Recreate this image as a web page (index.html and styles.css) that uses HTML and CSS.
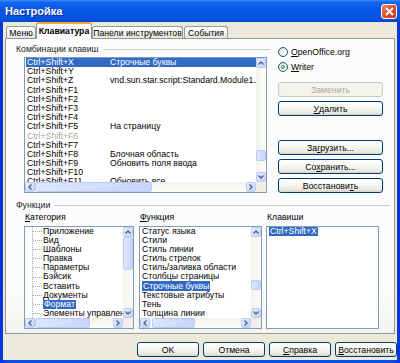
FILE: index.html
```html
<!DOCTYPE html>
<html lang="ru">
<head>
<meta charset="utf-8">
<title>Настройка</title>
<link rel="stylesheet" href="styles.css">
</head>
<body>
<div class="window">
  <div class="titlebar">
    <span class="title">Настройка</span>
    <span class="close"><svg width="9" height="9" viewBox="0 0 9 9"><path d="M1 1 L8 8 M8 1 L1 8" stroke="#fff" stroke-width="1.8" fill="none"/></svg></span>
  </div>
  <div class="client">
    <div class="tabs">
      <div class="tab t-menu">Меню</div>
      <div class="tab active t-kbd">Клавиатура</div>
      <div class="tab t-tool">Панели инструментов</div>
      <div class="tab t-ev">События</div>
    </div>
    <div class="panel">
      <div class="top">
        <div class="keys-col">
          <div class="fline"><span>Комбинации клавиш</span><i></i></div>
          <div class="list keylist">
            <div class="view">
              <div class="row sel"><span class="c1">Ctrl+Shift+X</span><span>Строчные буквы</span></div>
              <div class="row"><span class="c1">Ctrl+Shift+Y</span></div>
              <div class="row"><span class="c1">Ctrl+Shift+Z</span><span>vnd.sun.star.script:Standard.Module1.Abzac</span></div>
              <div class="row"><span class="c1">Ctrl+Shift+F1</span></div>
              <div class="row"><span class="c1">Ctrl+Shift+F2</span></div>
              <div class="row"><span class="c1">Ctrl+Shift+F3</span></div>
              <div class="row"><span class="c1">Ctrl+Shift+F4</span></div>
              <div class="row"><span class="c1">Ctrl+Shift+F5</span><span>На страницу</span></div>
              <div class="row dis"><span class="c1">Ctrl+Shift+F6</span></div>
              <div class="row"><span class="c1">Ctrl+Shift+F7</span></div>
              <div class="row"><span class="c1">Ctrl+Shift+F8</span><span>Блочная область</span></div>
              <div class="row"><span class="c1">Ctrl+Shift+F9</span><span>Обновить поля ввода</span></div>
              <div class="row"><span class="c1">Ctrl+Shift+F10</span></div>
              <div class="row"><span class="c1">Ctrl+Shift+F11</span><span>Обновить все</span></div>
            </div>
            <div class="vscroll">
              <span class="sb-btn"><svg width="6" height="4" viewBox="0 0 6 4"><path d="M0.5 3.5 L3 1 L5.5 3.5" stroke="#4D6185" stroke-width="1.4" fill="none"/></svg></span>
              <span class="thumb v-key"></span>
              <span class="sb-btn end"><svg width="6" height="4" viewBox="0 0 6 4"><path d="M0.5 0.5 L3 3 L5.5 0.5" stroke="#4D6185" stroke-width="1.4" fill="none"/></svg></span>
            </div>
            <div class="hscroll">
              <span class="sb-btn"><svg width="4" height="6" viewBox="0 0 4 6"><path d="M3.5 0.5 L1 3 L3.5 5.5" stroke="#4D6185" stroke-width="1.4" fill="none"/></svg></span>
              <span class="thumb h-key"></span>
              <span class="sb-btn end"><svg width="4" height="6" viewBox="0 0 4 6"><path d="M0.5 0.5 L3 3 L0.5 5.5" stroke="#4D6185" stroke-width="1.4" fill="none"/></svg></span>
            </div>
            <div class="corner"></div>
          </div>
        </div>
        <div class="side">
          <div class="radio-row"><span class="radio"></span><span><u>O</u>penOffice.org</span></div>
          <div class="radio-row"><span class="radio on"><b></b></span><span><u>W</u>riter</span></div>
          <button class="btn disabled b-replace">Заменить</button>
          <button class="btn b-del"><u>У</u>далить</button>
          <button class="btn b-load">За<u>г</u>рузить...</button>
          <button class="btn b-next">Со<u>х</u>ранить...</button>
          <button class="btn b-next">Восстанови<u>т</u>ь</button>
        </div>
      </div>
      <div class="fline funcs"><span>Функции</span><i></i></div>
      <div class="cols">
        <div class="col cat">
          <div class="lbl"><u>К</u>атегория</div>
          <div class="list">
            <div class="view">
              <div class="tree">
                <div class="trow"><span class="twig"></span><span>Приложение</span></div>
                <div class="trow"><span class="twig"></span><span>Вид</span></div>
                <div class="trow"><span class="twig"></span><span>Шаблоны</span></div>
                <div class="trow"><span class="twig"></span><span>Правка</span></div>
                <div class="trow"><span class="twig"></span><span>Параметры</span></div>
                <div class="trow"><span class="twig"></span><span>Бэйсик</span></div>
                <div class="trow"><span class="twig"></span><span>Вставить</span></div>
                <div class="trow"><span class="twig"></span><span>Документы</span></div>
                <div class="trow"><span class="twig"></span><span class="hl">Формат</span></div>
                <div class="trow"><span class="twig"></span><span>Элементы управления</span></div>
              </div>
            </div>
            <div class="vscroll">
              <span class="sb-btn"><svg width="6" height="4" viewBox="0 0 6 4"><path d="M0.5 3.5 L3 1 L5.5 3.5" stroke="#4D6185" stroke-width="1.4" fill="none"/></svg></span>
              <span class="thumb v-cat"></span>
              <span class="sb-btn end"><svg width="6" height="4" viewBox="0 0 6 4"><path d="M0.5 0.5 L3 3 L5.5 0.5" stroke="#4D6185" stroke-width="1.4" fill="none"/></svg></span>
            </div>
            <div class="hscroll">
              <span class="sb-btn"><svg width="4" height="6" viewBox="0 0 4 6"><path d="M3.5 0.5 L1 3 L3.5 5.5" stroke="#4D6185" stroke-width="1.4" fill="none"/></svg></span>
              <span class="thumb h-cat"></span>
              <span class="sb-btn end"><svg width="4" height="6" viewBox="0 0 4 6"><path d="M0.5 0.5 L3 3 L0.5 5.5" stroke="#4D6185" stroke-width="1.4" fill="none"/></svg></span>
            </div>
            <div class="corner"></div>
          </div>
        </div>
        <div class="col func">
          <div class="lbl"><u>Ф</u>ункция</div>
          <div class="list">
            <div class="view fview">
              <div class="frow">Статус языка</div>
              <div class="frow">Стили</div>
              <div class="frow">Стиль линии</div>
              <div class="frow">Стиль стрелок</div>
              <div class="frow">Стиль/заливка области</div>
              <div class="frow">Столбцы страницы</div>
              <div class="frow"><span class="hl">Строчные буквы</span></div>
              <div class="frow">Текстовые атрибуты</div>
              <div class="frow">Тень</div>
              <div class="frow">Толщина линии</div>
            </div>
            <div class="vscroll">
              <span class="sb-btn"><svg width="6" height="4" viewBox="0 0 6 4"><path d="M0.5 3.5 L3 1 L5.5 3.5" stroke="#4D6185" stroke-width="1.4" fill="none"/></svg></span>
              <span class="thumb v-func"></span>
              <span class="sb-btn end"><svg width="6" height="4" viewBox="0 0 6 4"><path d="M0.5 0.5 L3 3 L5.5 0.5" stroke="#4D6185" stroke-width="1.4" fill="none"/></svg></span>
            </div>
            <div class="hscroll">
              <span class="sb-btn"><svg width="4" height="6" viewBox="0 0 4 6"><path d="M3.5 0.5 L1 3 L3.5 5.5" stroke="#4D6185" stroke-width="1.4" fill="none"/></svg></span>
              <span class="thumb h-func"></span>
              <span class="sb-btn end"><svg width="4" height="6" viewBox="0 0 4 6"><path d="M0.5 0.5 L3 3 L0.5 5.5" stroke="#4D6185" stroke-width="1.4" fill="none"/></svg></span>
            </div>
            <div class="corner"></div>
          </div>
        </div>
        <div class="col keys">
          <div class="lbl">Клавиши</div>
          <div class="list plain">
            <div class="view fview">
              <div class="frow"><span class="hl">Ctrl+Shift+X</span></div>
            </div>
          </div>
        </div>
      </div>
    </div>
    <div class="dlg-buttons">
      <button class="btn b-dlg">OK</button>
      <button class="btn b-dlg">Отмена</button>
      <button class="btn b-dlg"><u>С</u>правка</button>
      <button class="btn b-dlg"><u>В</u>осстановить</button>
    </div>
  </div>
</div>
</body>
</html>
```

FILE: styles.css
```css
* { box-sizing: border-box; }
body {
  margin: 0;
  width: 400px;
  height: 363px;
  overflow: hidden;
  font-family: "Liberation Sans", Arial, sans-serif;
  font-size: 8.7px;
  color: #000;
}
u { text-decoration: underline; text-underline-offset: 1px; }
.window {
  width: 400px;
  height: 363px;
  display: flex;
  flex-direction: column;
  background: linear-gradient(90deg, #0831D9, #0A50E0 2%, #0A50E0 98%, #0831D9);
}
.titlebar {
  height: 22px;
  flex: none;
  display: flex;
  align-items: center;
  justify-content: space-between;
  padding: 0 3px 0 5px;
  background: linear-gradient(#3C8EF6 0%, #1366EE 10%, #0758E8 40%, #0553E3 80%, #0547D0 100%);
}
.title {
  color: #fff;
  font-weight: bold;
  font-size: 11px;
  text-shadow: 1px 1px 0 #0A2A9A;
}
.close {
  width: 16px;
  height: 15px;
  border: 1px solid #fff;
  border-radius: 3px;
  background: linear-gradient(135deg, #F08A66 0%, #E0532F 45%, #C6391A 100%);
  display: flex;
  align-items: center;
  justify-content: center;
}
.client {
  flex: 1;
  margin: 0 3px 3px;
  background: #ECE9D8;
  display: flex;
  flex-direction: column;
}
.tabs {
  height: 16px;
  flex: none;
  display: flex;
  align-items: flex-end;
  padding-left: 3px;
  position: relative;
  z-index: 1;
}
.tab {
  height: 12px;
  border: 1px solid #919B9C;
  border-bottom: none;
  border-radius: 3px 3px 0 0;
  background: linear-gradient(#FFFFFF, #F3F3EF 60%, #E4E2D9);
  display: flex;
  align-items: center;
  justify-content: center;
  white-space: nowrap;
}
.t-menu { width: 30px; }
.t-kbd { width: 56px; }
.t-tool { width: 91px; }
.t-ev { width: 44px; margin-left: 1px; }
.tab.active {
  height: 17px;
  margin-bottom: -1px;
  background: #FCFCFE;
  border-top: 2px solid #F5A83A;
  font-weight: bold;
  padding-bottom: 1px;
}
.panel {
  height: 296px;
  flex: none;
  margin: 0 2px;
  border: 1px solid #919B9C;
  background: linear-gradient(#FCFCFE 85%, #F4F3EE);
  padding: 5px 4px 0 9px;
}
.top { display: flex; }
.keys-col { width: 255px; }
.fline {
  height: 10px;
  display: flex;
  align-items: center;
  gap: 4px;
  color: #222;
  white-space: nowrap;
  padding-left: 1px;
}
.fline i {
  flex: 1;
  height: 1px;
  background: #D0D0BF;
}
.list {
  border: 1px solid #7F9DB9;
  background: #fff;
  display: grid;
  grid-template-columns: 1fr 10px;
  grid-template-rows: 1fr 10px;
  overflow: hidden;
}
.list.plain { display: block; }
.keylist {
  margin: 3px 0 0 9px;
  width: 243px;
  height: 136px;
}
.view { overflow: hidden; min-width: 0; min-height: 0; }
.row {
  height: 9.2px;
  line-height: 9.2px;
  display: flex;
  white-space: nowrap;
  margin-left: 1px;
  padding-left: 1px;
}
.row .c1 { width: 83px; flex: none; }
.row.sel { background: #316AC5; color: #fff; }
.row.dis { color: #ACA899; }
.vscroll {
  display: flex;
  flex-direction: column;
  background: linear-gradient(90deg, #F3F1EA, #FDFDFB);
}
.hscroll {
  display: flex;
  background: linear-gradient(#F3F1EA, #FDFDFB);
}
.corner { background: #F1EFE5; }
.sb-btn {
  flex: none;
  width: 10px;
  height: 10px;
  border: 1px solid #BACBF3;
  border-radius: 2px;
  background: linear-gradient(135deg, #E7EEFD, #C3D3FB);
  display: flex;
  align-items: center;
  justify-content: center;
}
.sb-btn.end { margin-left: auto; margin-top: auto; }
.hscroll .sb-btn.end { margin-top: 0; }
.vscroll .sb-btn.end { margin-left: 0; }
.thumb {
  flex: none;
  border: 1px solid #BACBF3;
  border-radius: 2px;
  background: linear-gradient(90deg, #DCE6FD, #C6D5FB);
}
.v-key { margin-top: 82px; height: 11px; }
.h-key { width: 117px; }
.v-cat { height: 33px; }
.h-cat { width: 55px; }
.v-func { margin-top: 43px; height: 10px; }
.h-func { width: 43px; margin-left: 2px; }
.side {
  margin-left: 8px;
  width: 105px;
  display: flex;
  flex-direction: column;
  padding-top: 3px;
}
.radio-row {
  height: 10px;
  display: flex;
  align-items: center;
  gap: 3px;
  margin-bottom: 5px;
}
.radio {
  width: 10px;
  height: 10px;
  border-radius: 50%;
  border: 1px solid #1C5180;
  background: linear-gradient(135deg, #DCDBD3, #FFFFFF);
  display: flex;
  align-items: center;
  justify-content: center;
}
.radio b {
  width: 4px;
  height: 4px;
  border-radius: 50%;
  background: radial-gradient(circle at 35% 35%, #7BE07B, #21A121);
}
.btn {
  height: 15px;
  padding: 0;
  border: 1px solid #003C74;
  border-radius: 3px;
  background: linear-gradient(#FFFFFF 0%, #F5F5F1 50%, #E9E7DF 85%, #D6D0C5 100%);
  font-family: inherit;
  font-size: 8.7px;
  color: #000;
  display: flex;
  align-items: center;
  justify-content: center;
}
.btn.disabled {
  border-color: #C9C7BA;
  background: #F5F4EA;
  color: #ACA899;
}
.b-replace { margin-top: 5px; }
.b-del { margin-top: 4px; }
.b-load { margin-top: 24px; }
.b-next { margin-top: 4px; }
.funcs { margin-top: 7px; }
.cols {
  display: flex;
  margin-top: 2px;
  padding-left: 9px;
}
.col { display: flex; flex-direction: column; }
.lbl { height: 10px; line-height: 10px; margin-bottom: 4px; padding-left: 1px; }
.col .list { height: 103px; }
.cat { width: 110px; }
.func { width: 123px; margin-left: 5px; }
.keys { width: 113px; margin-left: 4px; }
.tree {
  margin-left: 7px;
  border-left: 1px dotted #A8A8A8;
  min-height: 100%;
}
.trow {
  height: 9.1px;
  line-height: 9.1px;
  display: flex;
  align-items: center;
  white-space: nowrap;
}
.twig {
  width: 9px;
  flex: none;
  border-top: 1px dotted #A8A8A8;
  margin-right: 1px;
}
.hl { background: #316AC5; color: #fff; padding: 0 1px; }
.fview { padding-left: 1px; }
.frow {
  height: 9.1px;
  line-height: 9.1px;
  white-space: nowrap;
  padding-left: 1px;
}
.dlg-buttons {
  display: flex;
  justify-content: flex-end;
  gap: 4px;
  margin-top: 8px;
  padding-right: 0;
}
.b-dlg { width: 62px; }
```
